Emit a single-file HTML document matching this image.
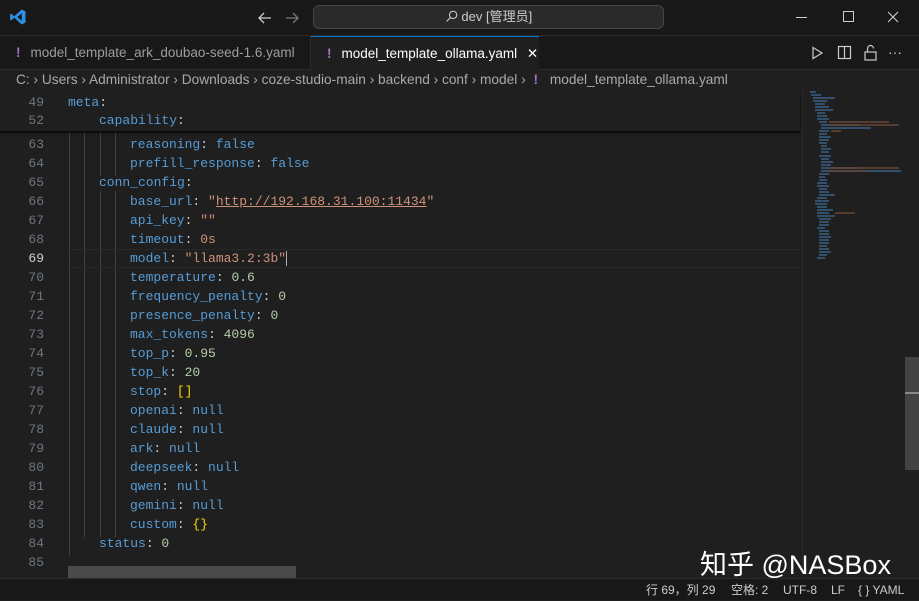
<!DOCTYPE html>
<html><head><meta charset="utf-8"><style>
*{margin:0;padding:0;box-sizing:border-box}
body{width:919px;height:600px;background:#1f1f1f;overflow:hidden;position:relative;font-family:"Liberation Sans","Noto Sans CJK SC",sans-serif;color:#ccc}
.abs{position:absolute}
#title{left:0;top:0;width:919px;height:36px;background:#181818;border-bottom:1px solid #2b2b2b}
#tabs{left:0;top:36px;width:919px;height:34px;background:#181818;border-bottom:1px solid #2b2b2b}
.tab{position:absolute;top:0;height:34px;font-size:13.5px;line-height:34px}
.code{font-family:"Liberation Mono",monospace;font-size:13px;white-space:pre;line-height:19px}
.ln{position:absolute;left:0;width:44px;text-align:right;color:#6e7681;font-family:"Liberation Mono",monospace;font-size:13px;line-height:19px}
.k{color:#569cd6}.p{color:#ccc}.s{color:#ce9178}.n{color:#b5cea8}.b{color:#569cd6}.y{color:#ffd700}
.guide{position:absolute;width:1px;background:#404040}
</style></head><body>
<div id="title" class="abs">
 <svg class="abs" style="left:9px;top:8px" width="18" height="18" viewBox="0 0 24 24"><path d="M17 2 L22 4.5 V19.5 L17 22 L7 13 L3 16.5 L1.5 15.5 V8.5 L3 7.5 L7 11 Z M17 7 L11 12 L17 17 Z" fill="#2f8fe0"/></svg>
 <svg class="abs" style="left:257px;top:10px" width="16" height="16" viewBox="0 0 16 16"><path d="M14 8H2M7 3L2 8l5 5" stroke="#ccc" stroke-width="1.3" fill="none"/></svg>
 <svg class="abs" style="left:284px;top:10px" width="16" height="16" viewBox="0 0 16 16"><path d="M2 8h12M9 3l5 5-5 5" stroke="#777" stroke-width="1.3" fill="none"/></svg>
 <div class="abs" style="left:313px;top:5px;width:351px;height:24px;background:#2a2a2a;border:1px solid #454545;border-radius:6px;font-size:13px;line-height:22px;text-align:center;color:#ccc">
  <svg style="vertical-align:-2px" width="13" height="13" viewBox="0 0 16 16"><circle cx="10" cy="6" r="4.5" stroke="#ccc" stroke-width="1.3" fill="none"/><path d="M7 9l-5 5" stroke="#ccc" stroke-width="1.4"/></svg> dev [管理员]</div>
 <div class="abs" style="left:796px;top:17px;width:11px;height:1px;background:#ccc"></div>
 <div class="abs" style="left:843px;top:11px;width:11px;height:11px;border:1px solid #ccc"></div>
 <svg class="abs" style="left:887px;top:11px" width="12" height="12"><path d="M1 1L11 11M11 1L1 11" stroke="#ccc" stroke-width="1.1"/></svg>
</div>
<div id="tabs" class="abs">
 <div class="tab" style="left:0;width:311px;color:#9d9d9d;border-right:1px solid #2b2b2b"><span style="color:#a074c4;font-weight:bold;margin:0 10px 0 16px">!</span>model_template_ark_doubao-seed-1.6.yaml</div>
 <div class="tab" style="left:311px;width:228px;background:#1f1f1f;color:#fff;border-top:1px solid #0078d4;height:35px"><span style="color:#a074c4;font-weight:bold;margin:0 10px 0 16px">!</span>model_template_ollama.yaml <span style="margin-left:6px">✕</span></div>
 <svg class="abs" style="left:810px;top:10px" width="14" height="14"><path d="M3 1.5L12 7L3 12.5Z" stroke="#ccc" fill="none" stroke-width="1.2"/></svg>
 <svg class="abs" style="left:837px;top:9px" width="15" height="15"><rect x="1.5" y="1.5" width="12" height="12" stroke="#ccc" fill="none" stroke-width="1.2"/><path d="M7.5 1.5v12" stroke="#ccc" stroke-width="1.2"/></svg>
 <svg class="abs" style="left:863px;top:8px" width="15" height="17"><rect x="2" y="8" width="11" height="8" stroke="#ccc" fill="none" stroke-width="1.2"/><path d="M4.5 8V4.5a3 3 0 0 1 6 0" stroke="#ccc" fill="none" stroke-width="1.2"/></svg>
 <div class="abs" style="left:888px;top:8px;font-size:14px;color:#ccc">···</div>
</div>
<div class="abs" style="left:16px;top:72px;font-size:13.7px;color:#a9a9a9;white-space:nowrap">C: › Users › Administrator › Downloads › coze-studio-main › backend › conf › model › <span style="color:#a074c4;font-weight:bold;margin:0 8px 0 4px">!</span> model_template_ollama.yaml</div>

<!-- sticky -->
<div class="abs" style="left:0;top:93px;width:800px;height:38px;background:#1f1f1f;box-shadow:0 2px 2px #0a0a0a;z-index:2">
 <div class="ln" style="top:0">49</div><div class="code abs" style="left:68px;top:0"><span class="k">meta</span><span class="p">:</span></div>
 <div class="ln" style="top:18px">52</div><div class="code abs" style="left:99px;top:18px"><span class="k">capability</span><span class="p">:</span></div>
</div>
<div class="guide" style="left:69px;top:131px;height:425px"></div>
<div class="guide" style="left:84px;top:131px;height:406px"></div>
<div class="guide" style="left:100px;top:131px;height:45px"></div>
<div class="guide" style="left:100px;top:191px;height:346px"></div>
<div class="guide" style="left:115px;top:131px;height:45px"></div>
<div class="guide" style="left:115px;top:191px;height:346px"></div>
<div class="abs" style="left:68px;top:249px;width:732px;height:19px;border-top:1px solid #282828;border-bottom:1px solid #282828"></div>

<div class="ln" style="top:135px">63</div><div class="code abs" style="left:130px;top:135px"><span class="k">reasoning</span>: <span class="b">false</span></div>
<div class="ln" style="top:154px">64</div><div class="code abs" style="left:130px;top:154px"><span class="k">prefill_response</span>: <span class="b">false</span></div>
<div class="ln" style="top:173px">65</div><div class="code abs" style="left:99px;top:173px"><span class="k">conn_config</span>:</div>
<div class="ln" style="top:192px">66</div><div class="code abs" style="left:130px;top:192px"><span class="k">base_url</span>: <span class="s">"<u>http://192.168.31.100:11434</u>"</span></div>
<div class="ln" style="top:211px">67</div><div class="code abs" style="left:130px;top:211px"><span class="k">api_key</span>: <span class="s">""</span></div>
<div class="ln" style="top:230px">68</div><div class="code abs" style="left:130px;top:230px"><span class="k">timeout</span>: <span class="s">0s</span></div>
<div class="ln" style="top:249px;color:#ccc">69</div><div class="code abs" style="left:130px;top:249px"><span class="k">model</span>: <span class="s">"llama3.2:3b"</span><span style="border-left:1px solid #aeafad"></span></div>
<div class="ln" style="top:268px">70</div><div class="code abs" style="left:130px;top:268px"><span class="k">temperature</span>: <span class="n">0.6</span></div>
<div class="ln" style="top:287px">71</div><div class="code abs" style="left:130px;top:287px"><span class="k">frequency_penalty</span>: <span class="n">0</span></div>
<div class="ln" style="top:306px">72</div><div class="code abs" style="left:130px;top:306px"><span class="k">presence_penalty</span>: <span class="n">0</span></div>
<div class="ln" style="top:325px">73</div><div class="code abs" style="left:130px;top:325px"><span class="k">max_tokens</span>: <span class="n">4096</span></div>
<div class="ln" style="top:344px">74</div><div class="code abs" style="left:130px;top:344px"><span class="k">top_p</span>: <span class="n">0.95</span></div>
<div class="ln" style="top:363px">75</div><div class="code abs" style="left:130px;top:363px"><span class="k">top_k</span>: <span class="n">20</span></div>
<div class="ln" style="top:382px">76</div><div class="code abs" style="left:130px;top:382px"><span class="k">stop</span>: <span class="y">[]</span></div>
<div class="ln" style="top:401px">77</div><div class="code abs" style="left:130px;top:401px"><span class="k">openai</span>: <span class="b">null</span></div>
<div class="ln" style="top:420px">78</div><div class="code abs" style="left:130px;top:420px"><span class="k">claude</span>: <span class="b">null</span></div>
<div class="ln" style="top:439px">79</div><div class="code abs" style="left:130px;top:439px"><span class="k">ark</span>: <span class="b">null</span></div>
<div class="ln" style="top:458px">80</div><div class="code abs" style="left:130px;top:458px"><span class="k">deepseek</span>: <span class="b">null</span></div>
<div class="ln" style="top:477px">81</div><div class="code abs" style="left:130px;top:477px"><span class="k">qwen</span>: <span class="b">null</span></div>
<div class="ln" style="top:496px">82</div><div class="code abs" style="left:130px;top:496px"><span class="k">gemini</span>: <span class="b">null</span></div>
<div class="ln" style="top:515px">83</div><div class="code abs" style="left:130px;top:515px"><span class="k">custom</span>: <span class="y">{}</span></div>
<div class="ln" style="top:534px">84</div><div class="code abs" style="left:99px;top:534px"><span class="k">status</span>: <span class="n">0</span></div>
<div class="ln" style="top:553px">85</div>

<!-- minimap -->
<div class="abs" style="left:802px;top:92px;width:1px;height:486px;background:#2a2a2a"></div>
<svg class="abs" style="left:805px;top:90px" width="100" height="180">
 <g stroke="#3d6d9a" stroke-width="1.2">
 <path d="M5 2h6M6 5h10M8 8h22M8 11h14M10 14h10M10 17h14M10 20h18M12 23h8M12 26h10M12 29h12M14 32h8M16 35h40M16 38h50M14 41h10M14 44h8M14 47h12M14 50h10M14 53h8M16 56h6M16 59h10M16 62h8M14 66h12M16 69h8M16 72h12M16 75h10M16 78h40M16 81h80M14 84h10M14 87h6M14 90h8M12 93h10M12 96h12M14 99h8M14 102h10M14 105h16M12 108h10M10 111h14M10 114h12M12 117h10M12 120h16M12 123h12M12 126h18M14 129h12M14 132h10M14 135h10M12 138h8M14 141h10M14 144h10M14 147h12M14 150h10M14 153h10M14 156h8M14 159h10M14 162h12M14 165h8M12 168h8"/></g>
 <g stroke="#8a5a40" stroke-width="1"><path d="M24 32h60M24 35h70M24 78h70M22 81h40M26 41h10M30 123h20"/></g>
</svg>
<div class="abs" style="left:905px;top:357px;width:14px;height:113px;background:#434343"></div>
<div class="abs" style="left:905px;top:392px;width:14px;height:2px;background:#888"></div>
<div class="abs" style="left:68px;top:566px;width:228px;height:12px;background:#4a4a4a"></div>

<div class="abs" style="left:700px;top:543px;font-size:27px;color:#fff;font-family:'Liberation Sans','Noto Sans CJK SC',sans-serif;white-space:nowrap">知乎 @NASBox</div>

<div class="abs" style="left:0;top:578px;width:919px;height:22px;background:#181818;border-top:1px solid #2b2b2b;font-size:12px;line-height:22px;color:#ccc;white-space:nowrap">
 <span class="abs" style="left:646px">行 69，列 29</span>
 <span class="abs" style="left:731px">空格: 2</span>
 <span class="abs" style="left:783px">UTF-8</span>
 <span class="abs" style="left:831px">LF</span>
 <span class="abs" style="left:858px">{ } YAML</span>
</div>
</body></html>
